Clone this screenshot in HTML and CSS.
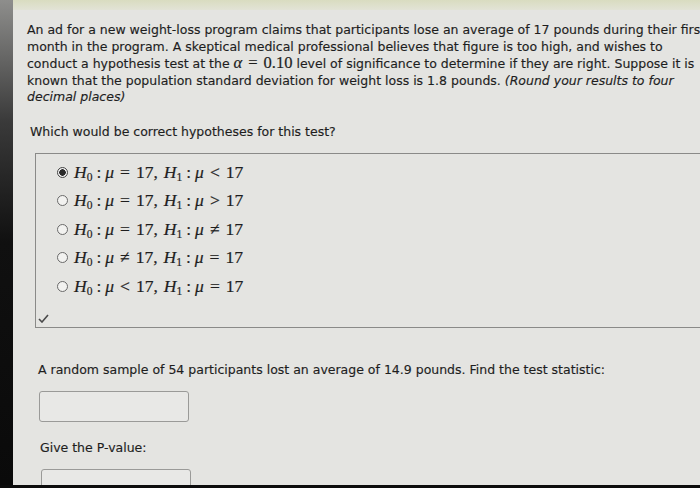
FILE: index.html
```html
<!DOCTYPE html>
<html>
<head>
<meta charset="utf-8">
<link rel="stylesheet" href="styles.css">
</head>
<body>
<div class="screen">
  <div class="edge"></div>
  <div class="page">
    <div class="topband"></div>
    <div class="content">
      <p class="intro">An ad for a new weight-loss program claims that participants lose an average of 17 pounds during their first<br>month in the program. A skeptical medical professional believes that figure is too high, and wishes to<br>conduct a hypothesis test at the <span class="m"><i>α</i><span class="rel">=</span>0.10</span> level of significance to determine if they are right. Suppose it is<br>known that the population standard deviation for weight loss is 1.8 pounds. <i>(Round your results to four</i><br><i>decimal places)</i></p>
      <p class="q1">Which would be correct hypotheses for this test?</p>
      <div class="choices">
        <div class="opt"><span class="radio on"></span><span class="m"><i>H</i><sub>0</sub><span class="col">:</span><i>μ</i><span class="rel">=</span>17,<span class="sp"></span><i>H</i><sub>1</sub><span class="col">:</span><i>μ</i><span class="rel">&lt;</span>17</span></div>
        <div class="opt"><span class="radio"></span><span class="m"><i>H</i><sub>0</sub><span class="col">:</span><i>μ</i><span class="rel">=</span>17,<span class="sp"></span><i>H</i><sub>1</sub><span class="col">:</span><i>μ</i><span class="rel">&gt;</span>17</span></div>
        <div class="opt"><span class="radio"></span><span class="m"><i>H</i><sub>0</sub><span class="col">:</span><i>μ</i><span class="rel">=</span>17,<span class="sp"></span><i>H</i><sub>1</sub><span class="col">:</span><i>μ</i><span class="rel">≠</span>17</span></div>
        <div class="opt"><span class="radio"></span><span class="m"><i>H</i><sub>0</sub><span class="col">:</span><i>μ</i><span class="rel">≠</span>17,<span class="sp"></span><i>H</i><sub>1</sub><span class="col">:</span><i>μ</i><span class="rel">=</span>17</span></div>
        <div class="opt"><span class="radio"></span><span class="m"><i>H</i><sub>0</sub><span class="col">:</span><i>μ</i><span class="rel">&lt;</span>17,<span class="sp"></span><i>H</i><sub>1</sub><span class="col">:</span><i>μ</i><span class="rel">=</span>17</span></div>
        <svg class="check" width="11" height="9" viewBox="0 0 11 9"><path d="M1 5 L4 8 L10 1" fill="none" stroke="#4a4a4a" stroke-width="1.6"/></svg>
      </div>
      <p class="q2">A random sample of 54 participants lost an average of 14.9 pounds. Find the test statistic:</p>
      <div class="field"></div>
      <p class="q3">Give the P-value:</p>
      <div class="field f2"></div>
    </div>
  </div>
</div>
<div class="bottom"></div>
</body>
</html>
```
FILE: styles.css
```css
html, body {
  margin: 0;
  padding: 0;
  width: 700px;
  height: 488px;
  overflow: hidden;
  background: #e3e3e0;
}
.screen {
  display: flex;
  height: 485px;
}
.edge {
  width: 13px;
  flex: none;
  background: linear-gradient(to bottom, #8e8e8c 0%, #3a3a3a 25%, #101010 50%, #0a0a0a 100%);
}
.page {
  flex: 1;
  min-width: 0;
  overflow: hidden;
  background: #e4e4e1;
}
.topband {
  height: 10px;
  background: linear-gradient(to bottom, #d9dcc0, #e2e3d6);
}
.content {
  padding-left: 14px;
  font-family: "DejaVu Sans", Verdana, sans-serif;
  font-size: 12.5px;
  color: #1e1e1e;
  -webkit-text-stroke: 0.15px #1e1e1e;
  white-space: nowrap;
}
.intro {
  margin: 12px 0 0 0;
  line-height: 16.6px;
}
.m {
  font-family: "Liberation Serif", "DejaVu Serif", serif;
  font-size: 17.5px;
  -webkit-text-stroke: 0.2px #1e1e1e;
}
.intro .m {
  font-size: 16.5px;
}
.m sub {
  font-size: 11.5px;
  vertical-align: -3px;
}
.rel {
  margin: 0 6px;
}
.col {
  margin: 0 4px;
}
.sp {
  display: inline-block;
  width: 6px;
}
.q1 {
  margin: 18px 0 0 3px;
}
.choices {
  position: relative;
  margin: 14px 0 0 8px;
  border: 1.5px solid #8a8a88;
  border-right: none;
  height: 175px;
  padding: 4px 0 0 21px;
  box-sizing: border-box;
}
.opt {
  display: flex;
  align-items: center;
  height: 28.5px;
  color: #1e1e1e;
}
.radio {
  width: 9px;
  height: 9px;
  border: 1px solid #6a6a6a;
  border-radius: 50%;
  margin-right: 6px;
  background: #f2f2f0;
  flex: none;
  box-sizing: content-box;
}
.radio.on {
  background: radial-gradient(circle, #2a2a2a 0 3px, #f0f0f0 3.5px);
  border-color: #444;
}
.check {
  position: absolute;
  left: 2px;
  bottom: 4px;
}
.q2 {
  margin: 34px 0 0 11px;
}
.field {
  margin: 14px 0 0 12px;
  width: 148px;
  height: 29px;
  border: 1.5px solid #9a9a98;
  border-radius: 3px;
  background: #e8e8e6;
}
.q3 {
  margin: 18px 0 0 13px;
}
.f2 {
  margin: 14px 0 0 14px;
}
.bottom {
  height: 3px;
  background: #0c0c0c;
}
```
